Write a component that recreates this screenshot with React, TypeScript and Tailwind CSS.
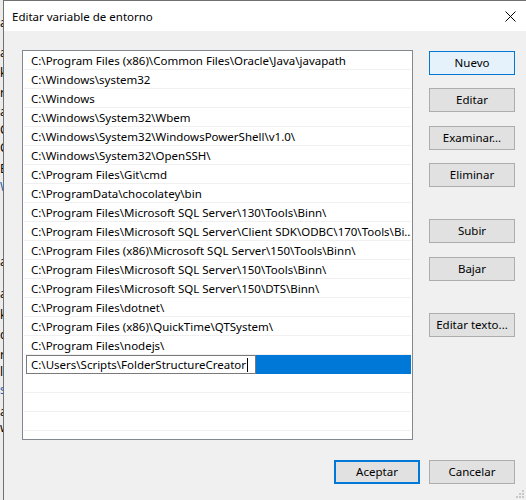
import React from "react"

const paths = [
  "C:\\Program Files (x86)\\Common Files\\Oracle\\Java\\javapath",
  "C:\\Windows\\system32",
  "C:\\Windows",
  "C:\\Windows\\System32\\Wbem",
  "C:\\Windows\\System32\\WindowsPowerShell\\v1.0\\",
  "C:\\Windows\\System32\\OpenSSH\\",
  "C:\\Program Files\\Git\\cmd",
  "C:\\ProgramData\\chocolatey\\bin",
  "C:\\Program Files\\Microsoft SQL Server\\130\\Tools\\Binn\\",
  "C:\\Program Files\\Microsoft SQL Server\\Client SDK\\ODBC\\170\\Tools\\Bi…",
  "C:\\Program Files (x86)\\Microsoft SQL Server\\150\\Tools\\Binn\\",
  "C:\\Program Files\\Microsoft SQL Server\\150\\Tools\\Binn\\",
  "C:\\Program Files\\Microsoft SQL Server\\150\\DTS\\Binn\\",
  "C:\\Program Files\\dotnet\\",
  "C:\\Program Files (x86)\\QuickTime\\QTSystem\\",
  "C:\\Program Files\\nodejs\\",
]

// slivers of the window sitting behind the dialog
const behind: [number, string, string?][] = [
  [12, ""], [19, "a"], [10, ""], [20, "a"], [20, "k"], [20, "r"], [19, "a"], [18, "C"], [18, "C"],
  [21, "E"], [18, "W", "#1a5fb4"], [75, "a"], [32, "a"], [21, "k"], [20, "c"], [20, "r"],
  [17, "l"], [18, "s", "#1a5fb4"], [22, "a"], [16, "w"],
]

function Btn({ label, primary, focused, className = "" }: { label: string; primary?: boolean; focused?: boolean; className?: string }) {
  const look = primary
    ? "bg-[#e5f1fb] border border-[#0078d7]"
    : focused
      ? "bg-[#e1e1e1] border-2 border-[#0078d7]"
      : "bg-[#e1e1e1] border border-[#adadad]"
  return (
    <div className={`w-[86px] h-[24px] flex items-center justify-center text-[11.5px] text-black ${look} ${className}`}>
      {label}
    </div>
  )
}

export default function App() {
  return (
    <div className="flex w-[526px] h-[500px] overflow-hidden bg-[#f0f0f0]" style={{ fontFamily: '"Noto Sans", "Open Sans", sans-serif' }}>
      <div className="w-[3px] shrink-0 overflow-hidden bg-[#ececec] text-[12px] leading-[16px] text-black">
        {behind.map(([h, c, col], i) => (
          <div key={i} className="flex items-end whitespace-nowrap" style={{ height: h, color: col }}>
            {c}
          </div>
        ))}
      </div>

      <div className="relative flex flex-col flex-1 border-l border-t border-[#707070] bg-[#f0f0f0]">
        {/* title bar */}
        <div className="h-[30px] bg-white flex items-center justify-between pl-[8px] pr-[10px]">
          <span className="text-[11.5px] text-black pt-[1px]">Editar variable de entorno</span>
          <svg width="11" height="11" viewBox="0 0 11 11">
            <path d="M0.5 0.5 L10.5 10.5 M10.5 0.5 L0.5 10.5" stroke="#000" strokeWidth="1" fill="none" />
          </svg>
        </div>

        <div className="flex pt-[19px] pl-[18px]">
          {/* path list */}
          <div className="w-[391px] h-[390px] border border-[#828790] bg-white px-[1px] overflow-hidden">
            {paths.map((p) => (
              <div key={p} className="h-[19px] border-b border-[#f0f0f0] pl-[7px] pt-[2px] flex items-center text-[11.5px] text-black whitespace-nowrap overflow-hidden">
                {p}
              </div>
            ))}
            <div className="h-[19px] flex">
              <div className="w-[2px] bg-white" />
              <div className="w-[230px] h-[19px] border border-[#7a7a7a] bg-white pl-[4px] pt-[1px] flex items-center text-[11.5px] text-black whitespace-nowrap">
                C:\Users\Scripts\FolderStructureCreator
                <span className="inline-block w-[1px] h-[14px] bg-black ml-[1px]" />
              </div>
              <div className="flex-1 bg-[#0078d7]" />
            </div>
            {[0, 1, 2, 3].map((i) => (
              <div key={i} className="h-[19px] border-b border-[#f0f0f0]" />
            ))}
          </div>

          {/* action buttons */}
          <div className="ml-[16px] pt-[1px] flex flex-col">
            <Btn label="Nuevo" primary />
            <Btn label="Editar" className="mt-[13px]" />
            <Btn label="Examinar..." className="mt-[14px]" />
            <Btn label="Eliminar" className="mt-[13px]" />
            <Btn label="Subir" className="mt-[32px]" />
            <Btn label="Bajar" className="mt-[14px]" />
            <Btn label="Editar texto..." className="mt-[32px]" />
          </div>
        </div>

        <div className="flex justify-end gap-[9px] mt-[20px] pr-[11px]">
          <Btn label="Aceptar" focused />
          <Btn label="Cancelar" />
        </div>

        {/* resize grip */}
        <svg className="absolute right-[2px] bottom-[2px]" width="8" height="8" viewBox="0 0 8 8">
          <rect x="6" y="0" width="2" height="2" fill="#c8c8c8" />
          <rect x="3" y="3" width="2" height="2" fill="#c8c8c8" />
          <rect x="6" y="3" width="2" height="2" fill="#c8c8c8" />
          <rect x="0" y="6" width="2" height="2" fill="#c8c8c8" />
          <rect x="3" y="6" width="2" height="2" fill="#c8c8c8" />
          <rect x="6" y="6" width="2" height="2" fill="#c8c8c8" />
        </svg>
      </div>
    </div>
  )
}
